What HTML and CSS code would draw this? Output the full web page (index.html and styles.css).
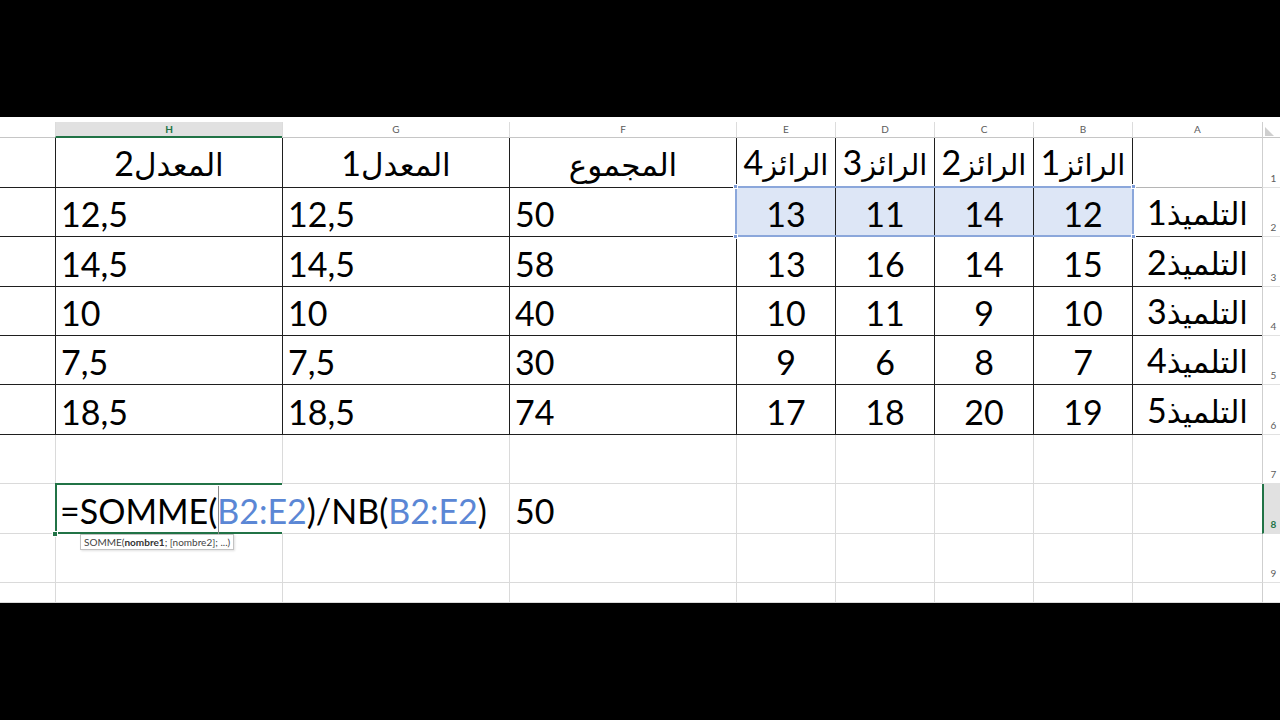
FILE: index.html
```html
<!DOCTYPE html>
<html lang="ar">
<head>
<meta charset="utf-8">
<title>Sheet</title>
<link rel="stylesheet" href="styles.css">
</head>
<body>
<div class="frame">
  <div class="bar"></div>
  <div class="sheet">
    <div class="strip"></div>
    <div class="grid">
      <!-- column headers -->
      <div class="corner"><svg width="12" height="12" viewBox="0 0 12 12"><polygon points="2,2 2,11 11,11" fill="#cfcfcf"/></svg></div>
      <div class="ch">A</div><div class="ch">B</div><div class="ch">C</div><div class="ch">D</div><div class="ch">E</div><div class="ch">F</div><div class="ch">G</div><div class="ch on">H</div><div class="ch i"></div>

      <!-- row 1 -->
      <div class="rh">1</div>
      <div class="c a1"></div>
      <div class="c t ctr"><span><span class="ar sm">الرائز</span>1</span></div>
      <div class="c t ctr"><span><span class="ar sm">الرائز</span>2</span></div>
      <div class="c t ctr"><span><span class="ar sm">الرائز</span>3</span></div>
      <div class="c t ctr"><span><span class="ar sm">الرائز</span>4</span></div>
      <div class="c t ctr"><span><span class="ar">المجموع</span></span></div>
      <div class="c t ctr"><span><span class="ar">المعدل</span>1</span></div>
      <div class="c t ctr"><span><span class="ar">المعدل</span>2</span></div>
      <div class="c i ib"></div>

      <!-- row 2 -->
      <div class="rh">2</div>
      <div class="c t ctr"><span><span class="ar">التلميذ</span>1</span></div>
      <div class="c t ctr sel refwrap"><span>12</span>
        <div class="refbox"><span class="hd h1"></span><span class="hd h2"></span><span class="hd h3"></span><span class="hd h4"></span></div>
      </div>
      <div class="c t ctr sel">14</div>
      <div class="c t ctr sel">11</div>
      <div class="c t ctr sel">13</div>
      <div class="c t lft">50</div>
      <div class="c t lft">12,5</div>
      <div class="c t lft">12,5</div>
      <div class="c i ib"></div>

      <!-- row 3 -->
      <div class="rh">3</div>
      <div class="c t ctr"><span><span class="ar">التلميذ</span>2</span></div>
      <div class="c t ctr">15</div>
      <div class="c t ctr">14</div>
      <div class="c t ctr">16</div>
      <div class="c t ctr">13</div>
      <div class="c t lft">58</div>
      <div class="c t lft">14,5</div>
      <div class="c t lft">14,5</div>
      <div class="c i ib"></div>

      <!-- row 4 -->
      <div class="rh">4</div>
      <div class="c t ctr"><span><span class="ar">التلميذ</span>3</span></div>
      <div class="c t ctr">10</div>
      <div class="c t ctr">9</div>
      <div class="c t ctr">11</div>
      <div class="c t ctr">10</div>
      <div class="c t lft">40</div>
      <div class="c t lft">10</div>
      <div class="c t lft">10</div>
      <div class="c i ib"></div>

      <!-- row 5 -->
      <div class="rh">5</div>
      <div class="c t ctr"><span><span class="ar">التلميذ</span>4</span></div>
      <div class="c t ctr">7</div>
      <div class="c t ctr">8</div>
      <div class="c t ctr">6</div>
      <div class="c t ctr">9</div>
      <div class="c t lft">30</div>
      <div class="c t lft">7,5</div>
      <div class="c t lft">7,5</div>
      <div class="c i ib"></div>

      <!-- row 6 -->
      <div class="rh">6</div>
      <div class="c t ctr"><span><span class="ar">التلميذ</span>5</span></div>
      <div class="c t ctr">19</div>
      <div class="c t ctr">20</div>
      <div class="c t ctr">18</div>
      <div class="c t ctr">17</div>
      <div class="c t lft">74</div>
      <div class="c t lft">18,5</div>
      <div class="c t lft">18,5</div>
      <div class="c i ib"></div>

      <!-- row 7 -->
      <div class="rh">7</div>
      <div class="c"></div><div class="c"></div><div class="c"></div><div class="c"></div><div class="c"></div><div class="c"></div><div class="c"></div><div class="c"></div><div class="c i"></div>

      <!-- row 8 -->
      <div class="rh on">8</div>
      <div class="c"></div><div class="c"></div><div class="c"></div><div class="c"></div><div class="c"></div>
      <div class="c lft">50</div>
      <div class="c nol"></div>
      <div class="editor"><span class="ftext">=SOMME(<span class="caret"></span><span class="ref">B2:E2</span>)/NB(<span class="ref">B2:E2</span>)</span><span class="fill"></span><div class="tip">SOMME(<b>nombre1</b>; [nombre2]; ...)</div></div>
      <div class="c i"></div>

      <!-- row 9 -->
      <div class="rh">9</div>
      <div class="c"></div><div class="c"></div><div class="c"></div><div class="c"></div><div class="c"></div><div class="c"></div><div class="c"></div><div class="c"></div><div class="c i"></div>

      <!-- row 10 (cut off) -->
      <div class="rh"></div>
      <div class="c"></div><div class="c"></div><div class="c"></div><div class="c"></div><div class="c"></div><div class="c"></div><div class="c"></div><div class="c"></div><div class="c i"></div>
    </div>
  </div>
  <div class="bar bottom"></div>
</div>
</body>
</html>
```

FILE: styles.css
```css
* { box-sizing: border-box; }
html, body { margin: 0; padding: 0; background: #000; }

.frame {
  width: 1280px;
  height: 720px;
  display: flex;
  flex-direction: column;
  overflow: hidden;
}
.bar { height: 117px; flex: none; background: #000; }
.bar.bottom { flex: 1; }

.sheet {
  height: 486px;
  flex: none;
  background: #fff;
  display: flex;
  flex-direction: column;
  overflow: hidden;
}
.strip { height: 5px; flex: none; background: #fff; }

.grid {
  direction: rtl;
  display: grid;
  grid-template-columns: 18px 130px 99px 99px 99px 99px 227px 227px 227px 55px;
  grid-template-rows: 16px 50px 49px 50px 49px 49px 50px 49px 50px 49px 20px;
  font-family: "Lato", "DejaVu Sans", sans-serif;
  font-size: 34px;
  color: #000;
}

/* headers */
.corner {
  border-left: 1px solid #cfcfcf;
  border-bottom: 1px solid #c6c6c6;
  display: flex;
  align-items: flex-end;
  justify-content: flex-end;
  padding: 0 3px 0 0;
}
.corner svg { display: block; }

.ch {
  border-left: 1px solid #dcdcdc;
  border-bottom: 1px solid #c6c6c6;
  font-family: "Lato", sans-serif;
  font-size: 10px;
  line-height: 15px;
  color: #5c5c5c;
  text-align: center;
}
.ch.on {
  background: #e1e1e1;
  border-bottom: 2px solid #217346;
  color: #217346;
  font-weight: bold;
}
.ch.i { border-left: 0; }

.rh {
  border-left: 1px solid #cfcfcf;
  border-bottom: 1px solid #e1e1e1;
  font-family: "Lato", sans-serif;
  font-size: 10px;
  line-height: 12px;
  color: #5c5c5c;
  display: grid;
  align-content: end;
  text-align: center;
  padding: 0 0 3px 4px;
}
.rh.on {
  background: #e1e1e1;
  border-left: 2px solid #217346;
  color: #217346;
  font-weight: bold;
  padding-left: 3px;
}

/* cells */
.c {
  border-left: 1px solid #dadada;
  border-bottom: 1px solid #dadada;
  display: grid;
  align-content: end;
  line-height: 40px;
  padding: 0 5px 2px 5px;
  white-space: nowrap;
}
.c.t { border-left-color: #1f1f1f; border-bottom-color: #1f1f1f; }
.c.a1 { border-left-color: #1f1f1f; border-bottom-color: #b5b5b5; }
.c.ib { border-bottom-color: #1f1f1f; }
.c.i { border-left: 0; }
.c.nol { border-left: 0; }
.ctr { text-align: center; }
.lft { text-align: left; }
.sel { background: #dde6f6; }
.ar { font-family: "DejaVu Sans", sans-serif; font-size: 31px; }
.ar.sm { font-size: 29px; }

/* formula reference highlight */
.refwrap { position: relative; }
.refbox {
  position: absolute;
  top: -2px;
  right: -2px;
  width: 399px;
  height: 51px;
  border: 2px solid #8ba7db;
  pointer-events: none;
}
.hd {
  position: absolute;
  width: 5px;
  height: 5px;
  background: #7d9bd6;
  border: 1px solid #fff;
}
.h1 { top: -4px; left: -4px; }
.h2 { top: -4px; right: -4px; }
.h3 { bottom: -4px; left: -4px; }
.h4 { bottom: -4px; right: -4px; }

/* active cell in edit mode */
.editor {
  position: relative;
  margin-top: -1px;
  border: 2px solid #217346;
  border-right: 0;
  background: #fff;
  direction: ltr;
  display: grid;
  align-content: end;
  line-height: 40px;
  padding: 0 0 1px 3px;
  white-space: nowrap;
  z-index: 2;
}
.ftext { display: block; }
.ref { color: #5b87d5; }
.caret {
  position: relative;
  display: inline-block;
  width: 0;
  height: 0;
}
.caret::after {
  content: "";
  position: absolute;
  left: 1px;
  bottom: -11px;
  width: 1px;
  height: 49px;
  background: #8a8a8a;
}
.fill {
  position: absolute;
  left: -5px;
  bottom: -5px;
  width: 6px;
  height: 6px;
  background: #217346;
  border: 1px solid #fff;
}
.tip {
  position: absolute;
  left: 23px;
  top: 49px;
  padding: 0 3px;
  height: 16px;
  border: 1px solid #c3c3c3;
  background: #fff;
  box-shadow: 1px 1px 2px rgba(0,0,0,0.12);
  font-family: "Lato", sans-serif;
  font-size: 10px;
  line-height: 14px;
  color: #444;
}
.tip b { color: #333; }
```
